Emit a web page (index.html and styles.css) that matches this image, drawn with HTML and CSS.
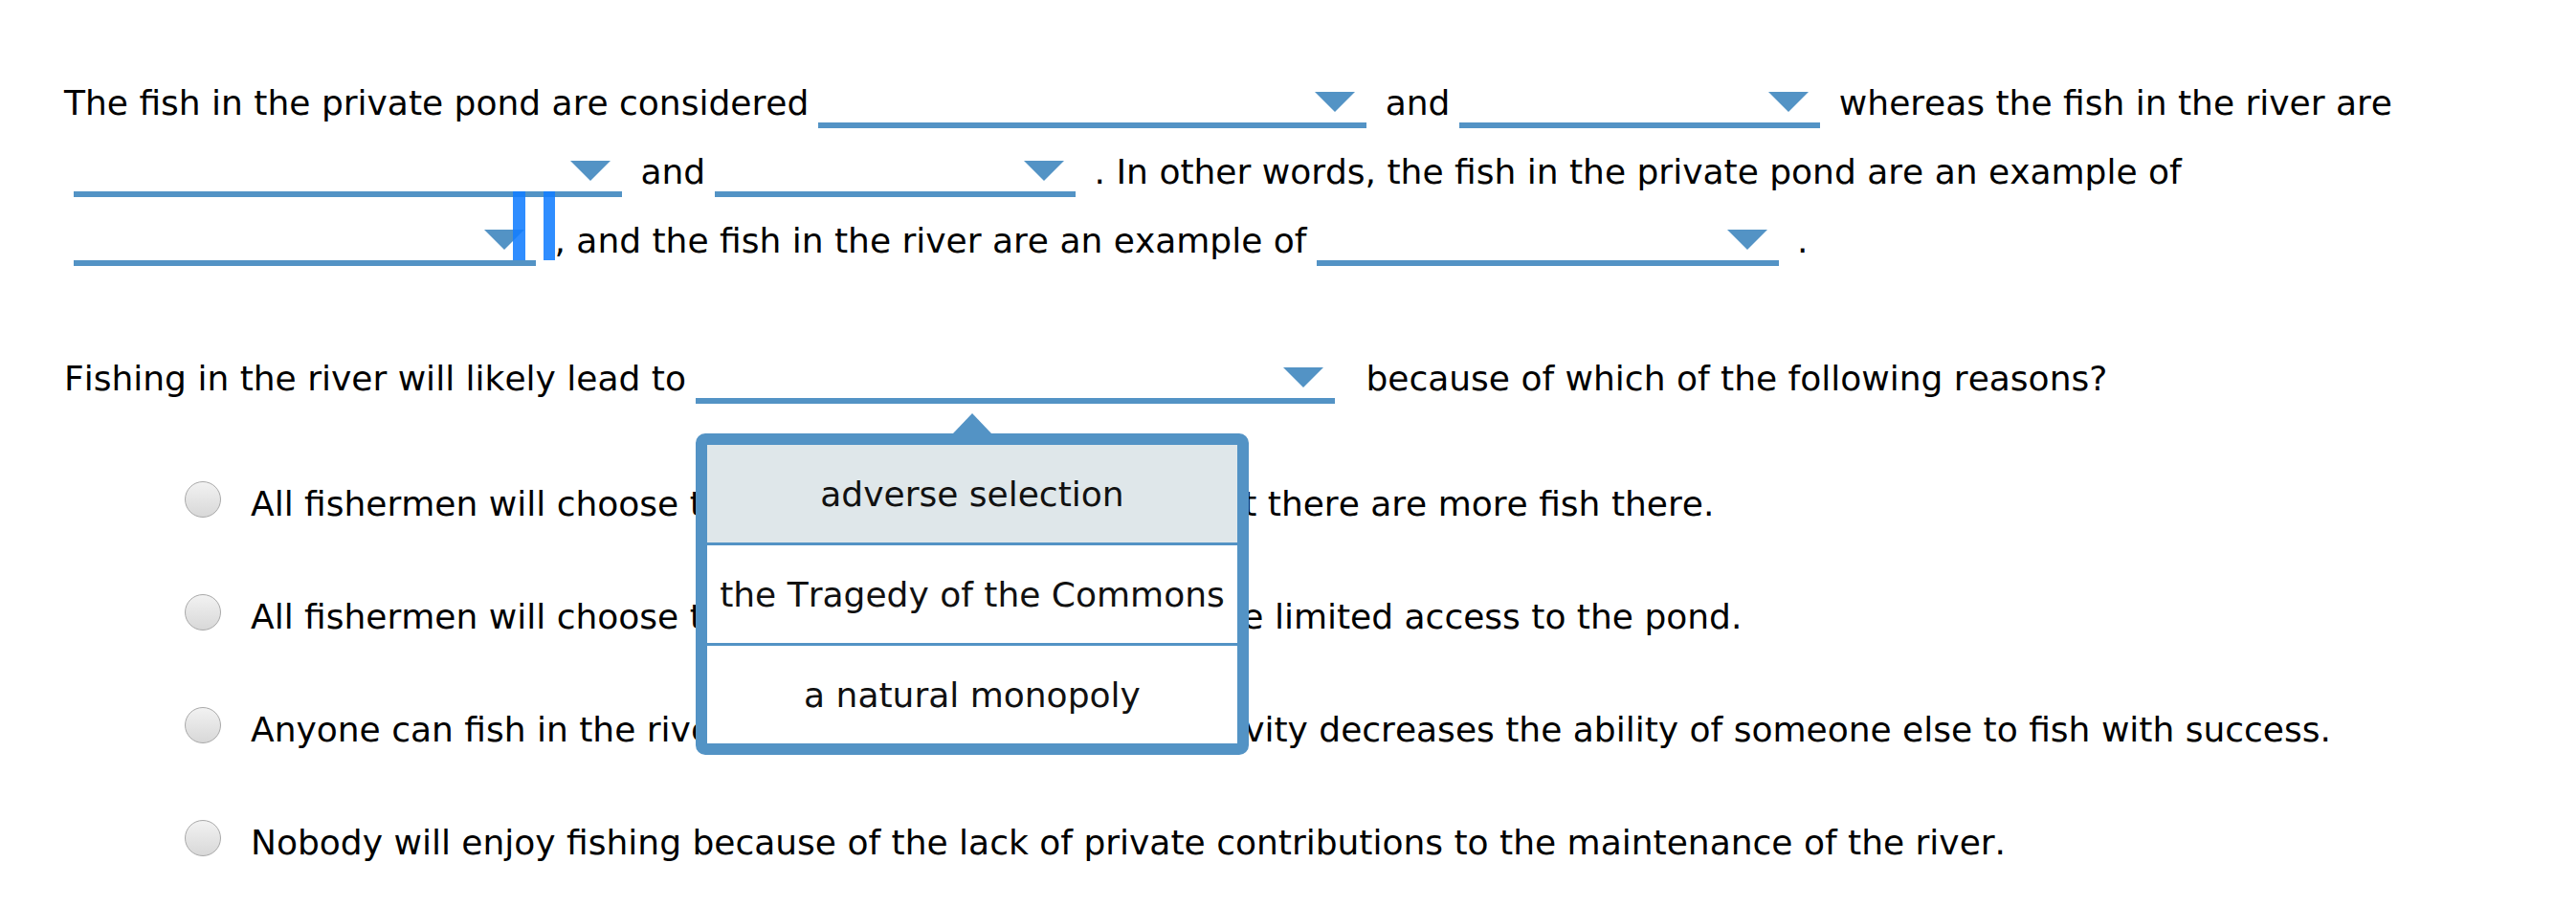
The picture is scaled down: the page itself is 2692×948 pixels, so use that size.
FILE: index.html
```html
<!DOCTYPE html>
<html lang="en">
<head>
<meta charset="utf-8">
<title>Fishing question</title>
<link rel="stylesheet" href="styles.css">
</head>
<body>
<div class="page">
  <div class="q q-first">The fish in the private pond are considered<span class="dd w-a"><svg class="caret" viewBox="0 0 42 21"><path d="M0 0H42L21 21Z"/></svg></span> and<span class="dd w-b"><svg class="caret" viewBox="0 0 42 21"><path d="M0 0H42L21 21Z"/></svg></span> whereas the fish in the river are <span class="dd w-a"><svg class="caret" viewBox="0 0 42 21"><path d="M0 0H42L21 21Z"/></svg></span> and<span class="dd w-b"><svg class="caret" viewBox="0 0 42 21"><path d="M0 0H42L21 21Z"/></svg></span> . In other words, the fish in the private pond are an example of <span class="dd w-c has-caret-marks"><svg class="caret" viewBox="0 0 42 21"><path d="M0 0H42L21 21Z"/></svg><span class="mark mark-1"></span><span class="mark mark-2"></span></span> , and the fish in the river are an example of<span class="dd w-c"><svg class="caret" viewBox="0 0 42 21"><path d="M0 0H42L21 21Z"/></svg></span> .</div>

  <div class="q q-second">Fishing in the river will likely lead to<span class="dd w-d is-open"><svg class="caret" viewBox="0 0 42 21"><path d="M0 0H42L21 21Z"/></svg><span class="menu" role="listbox"><span class="menu-item is-active" role="option">adverse selection</span><span class="menu-item" role="option">the Tragedy of the Commons</span><span class="menu-item" role="option">a natural monopoly</span></span></span> because of which of the following reasons?</div>

  <ul class="options">
    <li class="option"><span class="radio"></span>All fishermen will choose to fish in the river, believing that there are more fish there.</li>
    <li class="option"><span class="radio"></span>All fishermen will choose to fish in the river because of the limited access to the pond.</li>
    <li class="option"><span class="radio"></span>Anyone can fish in the river, and one person's fishing activity decreases the ability of someone else to fish with success.</li>
    <li class="option"><span class="radio"></span>Nobody will enjoy fishing because of the lack of private contributions to the maintenance of the river.</li>
  </ul>
</div>
</body>
</html>
```

FILE: styles.css
```css
html, body {
  margin: 0;
  padding: 0;
  background: #ffffff;
}

body {
  font-family: "DejaVu Sans", Verdana, sans-serif;
  font-size: 36px;
  font-kerning: none;
  color: #000000;
}

.page {
  padding: 72px 0 0 67px;
}

.q {
  line-height: 72px;
  margin: 0;
}

.q-second {
  margin-top: 72px;
}

.dd {
  position: relative;
  display: inline-flex;
  justify-content: flex-end;
  align-items: flex-end;
  box-sizing: border-box;
  height: 46px;
  padding: 0 12px 11px 0;
  margin: 0 8px 0 10px;
  border-bottom: 6px solid #5393c5;
  vertical-align: 3px;
}

.w-a { width: 573px; }
.w-b { width: 377px; }
.w-c { width: 483px; }
.w-d { width: 668px; margin-right: 21px; }

.caret {
  display: block;
  width: 42px;
  height: 21px;
  fill: #5393c5;
}

.mark {
  position: absolute;
  bottom: 0;
  height: 72px;
  background: rgba(18, 125, 255, 0.88);
}

.mark-1 {
  left: 459px;
  width: 13px;
}

.mark-2 {
  left: 491px;
  width: 12px;
}

.menu {
  position: absolute;
  z-index: 10;
  left: 0;
  top: 77px;
  display: flex;
  flex-direction: column;
  box-sizing: border-box;
  width: 578px;
  border: 12px solid #5393c5;
  border-radius: 10px;
  background: #ffffff;
  line-height: 42px;
}

.menu::before {
  content: "";
  position: absolute;
  top: -33px;
  left: 50%;
  margin-left: -20px;
  border-left: 20px solid transparent;
  border-right: 20px solid transparent;
  border-bottom: 21px solid #5393c5;
}

.menu-item {
  display: flex;
  align-items: center;
  justify-content: center;
  height: 100px;
  padding-top: 2px;
  white-space: nowrap;
  color: #111111;
}

.menu-item + .menu-item {
  border-top: 3px solid #5393c5;
}

.menu-item.is-active {
  background: #dfe7ea;
}

.options {
  list-style: none;
  margin: 59px 0 0 0;
  padding: 0;
}

.option {
  line-height: 72px;
  padding-left: 126px;
}

.option + .option {
  margin-top: 46px;
}

.radio {
  display: inline-block;
  box-sizing: border-box;
  width: 38px;
  height: 38px;
  margin-right: 31px;
  border: 1px solid #a9a9a9;
  border-radius: 50%;
  background: linear-gradient(#f2f2f2, #d8d8d8);
  vertical-align: -2px;
}
```
